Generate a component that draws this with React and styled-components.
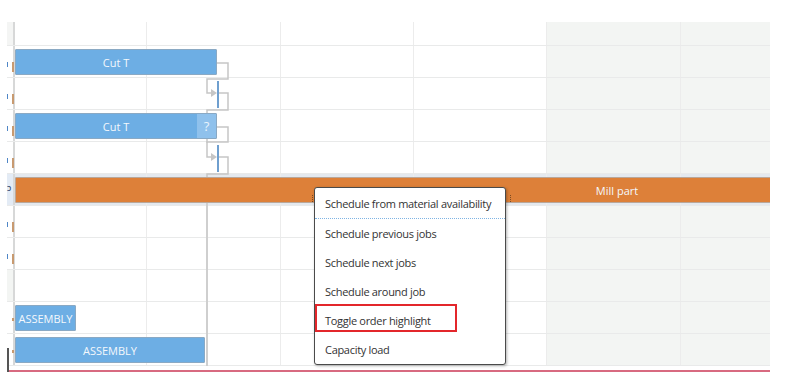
import React from "react";
import styled, { createGlobalStyle } from "styled-components";

const GlobalStyle = createGlobalStyle`
  html, body {
    margin: 0;
    padding: 0;
    background: #ffffff;
  }
  body {
    font-family: "Open Sans", "Noto Sans", sans-serif;
  }
`;

const Page = styled.div`
  position: relative;
  width: 800px;
  height: 380px;
  padding: 22px 0 0 7px;
  box-sizing: border-box;
  overflow: hidden;
`;

const Chart = styled.div`
  display: flex;
  flex-direction: column;
  width: 763px;
`;

const Row = styled.div`
  display: flex;
  height: ${(p) => p.h || 32}px;
  box-sizing: border-box;
  border-bottom: 1px solid #e9eaea;
`;

const Stub = styled.div`
  position: relative;
  flex: 0 0 6px;
  background: ${(p) => p.bg || "transparent"};
  border-right: 2px solid #d7d8d8;
`;

const Mark = styled.span`
  position: absolute;
  left: ${(p) => p.x}px;
  top: ${(p) => p.y}px;
  width: ${(p) => p.w || 1}px;
  height: ${(p) => p.h}px;
  background: ${(p) => p.c};
`;

const StubGlyph = styled.span`
  position: absolute;
  left: 0;
  top: 8px;
  font-size: 9px;
  line-height: 12px;
  color: #2f4a70;
`;

const Track = styled.div`
  position: relative;
  flex: 1;
  display: grid;
  grid-template-columns: 132px 134px 133px 133px 134px 89px;
  overflow: hidden;
  background: ${(p) => p.bg || "transparent"};
`;

const Cell = styled.div`
  border-right: ${(p) => (p.last ? "none" : "1px solid #ececec")};
  background: ${(p) => (p.plain ? "transparent" : p.weekend ? "#f3f5f3" : "transparent")};
`;

const Bar = styled.div`
  position: absolute;
  left: ${(p) => p.left || 0}px;
  top: 3px;
  width: ${(p) => p.w}px;
  height: 26px;
  box-sizing: border-box;
  display: flex;
  align-items: center;
  justify-content: center;
  background: ${(p) => p.color};
  border: 1px solid ${(p) => p.edge};
  border-radius: 1px;
  color: #f4f8fc;
  font-size: 11px;
  white-space: nowrap;
  z-index: 2;
`;

const Unknown = styled.span`
  position: absolute;
  right: 0;
  top: 0;
  bottom: 0;
  width: 19px;
  display: flex;
  align-items: center;
  justify-content: center;
  background: #8fc1ec;
  font-size: 13px;
  color: #e9f3fc;
`;

const Handle = styled.span`
  position: absolute;
  left: ${(p) => p.x}px;
  top: 17px;
  height: 7px;
  border-left: 1px dotted #7a4a22;
`;

const Footer = styled.div`
  margin-top: 4px;
  width: 763px;
  height: 2px;
  background: #d86a80;
`;

const Connectors = styled.svg`
  position: absolute;
  left: 0;
  top: 0;
  z-index: 1;
  pointer-events: none;
`;

const Menu = styled.ul`
  position: absolute;
  left: 314px;
  top: 187px;
  width: 192px;
  margin: 0;
  padding: 0;
  list-style: none;
  box-sizing: border-box;
  background: #ffffff;
  border: 1px solid #4a4a4a;
  border-radius: 3px;
  box-shadow: 1px 1px 3px rgba(0, 0, 0, 0.3);
  z-index: 5;
`;

const Item = styled.li`
  position: relative;
  height: ${(p) => p.h || 29}px;
  display: flex;
  align-items: center;
  padding-left: 10px;
  font-size: 11px;
  letter-spacing: -0.3px;
  color: #333333;
  white-space: nowrap;
  border-bottom: ${(p) => (p.divider ? "1px dotted #7fb4e4" : "none")};
`;

const Highlight = styled.span`
  position: absolute;
  left: 0;
  top: -2px;
  width: 142px;
  height: 28px;
  box-sizing: border-box;
  border: 2px solid #e3262b;
`;

const cols = [0, 1, 2, 3, 4, 5];

function Cells({ plain }) {
  return cols.map((c) => (
    <Cell key={c} weekend={c >= 4} plain={plain} last={c === 5} />
  ));
}

function ChartRow({ h, stubBg, marks = [], glyph, trackBg, plain, children }) {
  return (
    <Row h={h}>
      <Stub bg={stubBg}>
        {glyph && <StubGlyph>{glyph}</StubGlyph>}
        {marks.map((m, i) => (
          <Mark key={i} {...m} />
        ))}
      </Stub>
      <Track bg={trackBg}>
        <Cells plain={plain} />
        {children}
      </Track>
    </Row>
  );
}

const blue = { color: "#6daee4", edge: "#8aa9c4" };
const jobMarks = [
  { x: 0, y: 16, h: 5, c: "#4f86c6" },
  { x: 5, y: 16, w: 2, h: 10, c: "#c89a70" },
];

const menuItems = [
  "Schedule previous jobs",
  "Schedule next jobs",
  "Schedule around job",
  "Toggle order highlight",
  "Capacity load",
];

export default function App() {
  return (
    <>
      <GlobalStyle />
      <Page>
        <Chart>
          <ChartRow h={24} stubBg="#f4f5f4" />
          <ChartRow marks={jobMarks}>
            <Bar w={202} {...blue}>Cut T</Bar>
          </ChartRow>
          <ChartRow marks={jobMarks} />
          <ChartRow marks={jobMarks}>
            <Bar w={202} {...blue}>
              Cut T
              <Unknown>?</Unknown>
            </Bar>
          </ChartRow>
          <ChartRow marks={jobMarks} />
          <ChartRow stubBg="#e3ebf5" glyph="ɔ" trackBg="#e4e9ef" plain>
            <Bar w={1204} color="#dd8039" edge="#b9a79a">
              <Handle x={296} />
              Mill part
              <Handle x={494} />
            </Bar>
          </ChartRow>
          <ChartRow marks={jobMarks} />
          <ChartRow marks={jobMarks} />
          <ChartRow stubBg="#f3f5f3" />
          <ChartRow marks={[{ x: 5, y: 16, w: 2, h: 3, c: "#c89a70" }]}>
            <Bar w={61} {...blue}>ASSEMBLY</Bar>
          </ChartRow>
          <ChartRow
            marks={[
              { x: 5, y: 16, w: 2, h: 3, c: "#c89a70" },
              { x: 0, y: 14, w: 2, h: 24, c: "#555555" },
            ]}
          >
            <Bar w={190} {...blue}>ASSEMBLY</Bar>
          </ChartRow>
        </Chart>
        <Footer />

        <Connectors width="800" height="380">
          <g fill="none" stroke="#c6c6c6" strokeWidth="1.5">
            <polyline points="217,63 228,63 228,79 207,79 207,93 215,93" />
            <polyline points="219,93 228,93 228,110 207,110 207,143" />
            <polyline points="217,127 228,127 228,142 207,142 207,157 215,157" />
            <polyline points="219,157 228,157 228,174 207,174 207,177" />
            <line x1="207" y1="203" x2="207" y2="366" strokeWidth="2" stroke="#cfcfcf" />
          </g>
          <g fill="#c6c6c6">
            <polygon points="211,89 217,93 211,97" />
            <polygon points="211,153 217,157 211,161" />
          </g>
          <g stroke="#6f9fcf" strokeWidth="2">
            <line x1="218" y1="81" x2="218" y2="108" />
            <line x1="218" y1="145" x2="218" y2="172" />
          </g>
        </Connectors>

        <Menu>
          <Item h={30} divider>
            Schedule from material availability
          </Item>
          {menuItems.map((label) => (
            <Item key={label}>
              {label === "Toggle order highlight" && <Highlight />}
              {label}
            </Item>
          ))}
        </Menu>
      </Page>
    </>
  );
}
